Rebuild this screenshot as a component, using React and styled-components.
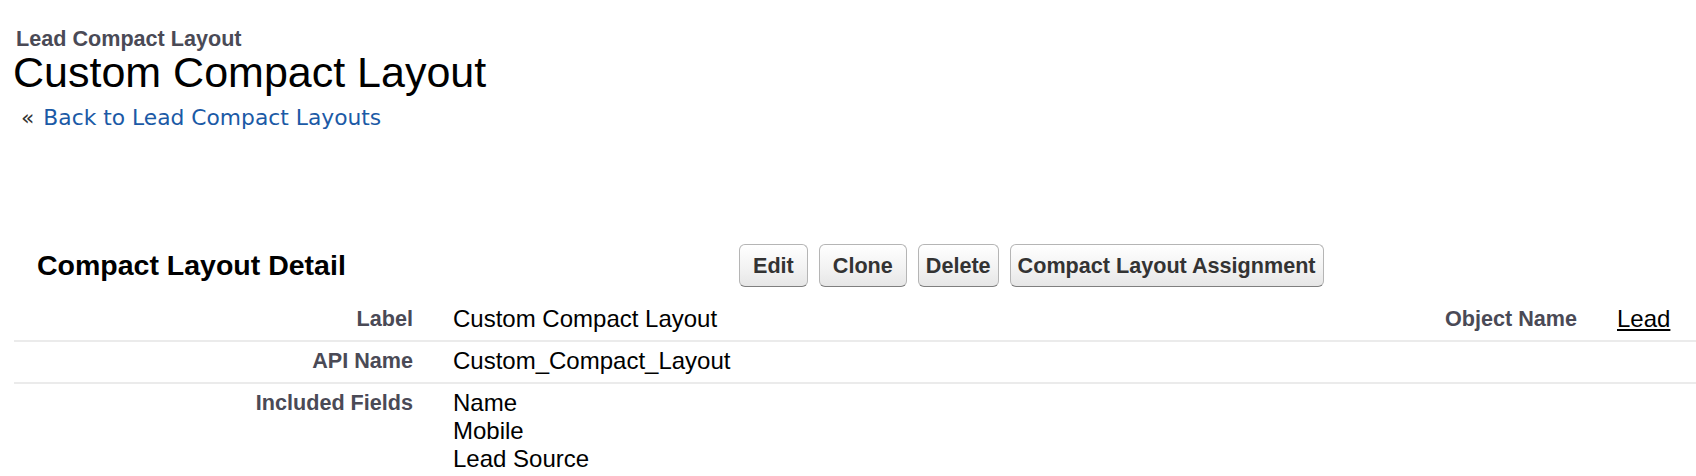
import styled, { createGlobalStyle } from "styled-components"

const GlobalStyle = createGlobalStyle`
    html, body {
        margin: 0;
        padding: 0;
        background: #fff;
        overflow: hidden;
    }
    body {
        font-family: "Liberation Sans", Arial, sans-serif;
        color: #000;
    }
`

const Page = styled.div`
    width: 100%;
    overflow: hidden;
`
const PageTitle = styled.div`
    padding-top: 28px;
    display: flex;
    flex-direction: column;
`
const PageType = styled.h1`
    margin: 0 0 0 16px;
    font-size: 21.6px;
    line-height: 22px;
    font-weight: bold;
    color: #4a4a56;
`
const PageDescription = styled.h2`
    margin: 2px 0 0 13px;
    font-size: 43px;
    line-height: 40px;
    font-weight: normal;
    color: #000;
`
const Breadcrumb = styled.div`
    margin-top: 13px;
    padding-left: 21px;
    display: flex;
    align-items: baseline;
    font-family: "DejaVu Sans", Verdana, sans-serif;
    font-size: 21.8px;
    line-height: 26px;
    color: #333;
`
const Crumb = styled.a`
    margin-left: 9px;
    color: #1b5aa6;
    text-decoration: none;
`
const Block = styled.div`
    margin: 113px 0 0 14px;
    width: 2328px;
`
const BlockHeader = styled.div`
    display: grid;
    grid-template-columns: 725px auto;
    align-items: center;
    height: 43px;
`
const BlockTitle = styled.h2`
    margin: 0;
    padding-left: 23px;
    font-size: 28.5px;
    line-height: 43px;
    font-weight: bold;
    color: #000;
`
const Buttons = styled.div`
    display: flex;
    gap: 11px;
`
const Button = styled.button`
    height: 43px;
    padding: 4px ${p => (p.$wide ? "13px" : "7px")};
    font-family: "Liberation Sans", Arial, sans-serif;
    font-size: 21.6px;
    line-height: 33px;
    font-weight: bold;
    color: #333;
    background: linear-gradient(#ffffff, #f3f3f3 55%, #e6e6e6);
    border: 1px solid #b5b5b5;
    border-bottom-color: #7f7f7f;
    border-radius: 6px;
    cursor: pointer;
`
const DetailList = styled.div`
    margin-top: 13px;
    display: grid;
    grid-template-columns: 419px 745px 419px 745px;
`
const Row = styled.div`
    display: contents;
`
const Cell = styled.div`
    padding: 5px 0 7px;
    border-bottom: ${p => (p.$last ? "none" : "2px solid #ebebeb")};
    line-height: 28px;
`
const LabelCol = styled(Cell)`
    padding-right: 20px;
    text-align: right;
    font-size: 21.6px;
    font-weight: bold;
    color: #4a4a56;
`
const DataCol = styled(Cell)`
    padding-left: 20px;
    font-size: 24px;
    color: #000;
`
const Lookup = styled.a`
    color: #000;
    text-decoration: underline;
`

const rows = [
    { label: "Label", value: "Custom Compact Layout", label2: "Object Name", value2: <Lookup href="#">Lead</Lookup> },
    { label: "API Name", value: "Custom_Compact_Layout" },
    { label: "Included Fields", value: ["Name", "Mobile", "Lead Source"], last: true },
]

const App = () => {
    return (
        <Page>
            <GlobalStyle />
            <PageTitle>
                <PageType>Lead Compact Layout</PageType>
                <PageDescription>Custom Compact Layout</PageDescription>
                <Breadcrumb>
                    <span>«</span>
                    <Crumb href="#">Back to Lead Compact Layouts</Crumb>
                </Breadcrumb>
            </PageTitle>
            <Block>
                <BlockHeader>
                    <BlockTitle>Compact Layout Detail</BlockTitle>
                    <Buttons>
                        <Button $wide>Edit</Button>
                        <Button $wide>Clone</Button>
                        <Button>Delete</Button>
                        <Button>Compact Layout Assignment</Button>
                    </Buttons>
                </BlockHeader>
                <DetailList>
                    {rows.map(r => (
                        <Row key={r.label}>
                            <LabelCol $last={r.last}>{r.label}</LabelCol>
                            <DataCol $last={r.last}>
                                {Array.isArray(r.value)
                                    ? r.value.map(v => <div key={v}>{v}</div>)
                                    : r.value}
                            </DataCol>
                            <LabelCol $last={r.last}>{r.label2}</LabelCol>
                            <DataCol $last={r.last}>{r.value2}</DataCol>
                        </Row>
                    ))}
                </DetailList>
            </Block>
        </Page>
    )
}

export default App
